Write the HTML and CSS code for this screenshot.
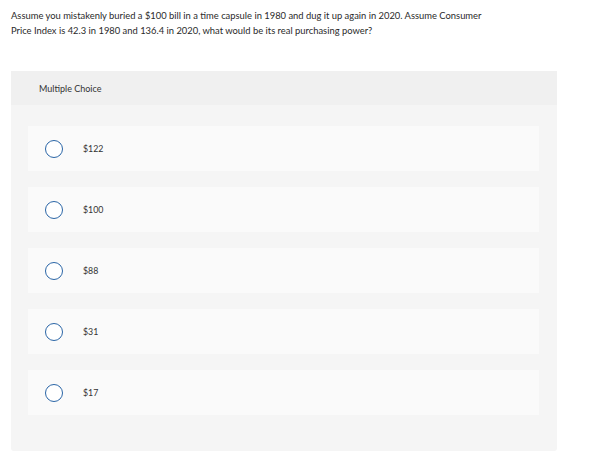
FILE: index.html
```html
<!DOCTYPE html>
<html>
<head>
<meta charset="utf-8">
<link rel="stylesheet" href="styles.css">
</head>
<body>
<div class="question">Assume you mistakenly buried a $100 bill in a time capsule in 1980 and dug it up again in 2020. Assume Consumer Price Index is 42.3 in 1980 and 136.4 in 2020, what would be its real purchasing power?</div>
<div class="panel">
  <div class="panel-header">Multiple Choice</div>
  <div class="panel-body">
    <div class="option"><span class="radio"></span><span class="label">$122</span></div>
    <div class="option"><span class="radio"></span><span class="label">$100</span></div>
    <div class="option"><span class="radio"></span><span class="label">$88</span></div>
    <div class="option"><span class="radio"></span><span class="label">$31</span></div>
    <div class="option"><span class="radio"></span><span class="label">$17</span></div>
  </div>
</div>
</body>
</html>
```
FILE: styles.css
```css
html, body {
  margin: 0;
  padding: 0;
  background: #ffffff;
}
body {
  font-family: Lato, "Liberation Sans", sans-serif;
  color: #2a2a2a;
}
.question {
  padding: 8px 0 0 11px;
  width: 490px;
  font-size: 9.4px;
  line-height: 15px;
}
.panel {
  margin: 33px 0 0 11px;
  width: 546px;
  background: #f5f5f5;
  border-radius: 0 0 3px 3px;
  padding-bottom: 36px;
}
.panel-header {
  height: 34px;
  background: #f0f0f0;
  display: flex;
  align-items: center;
  padding-left: 28px;
  font-size: 9px;
  color: #333333;
}
.panel-body {
  padding: 21px 18px 0 17px;
  display: flex;
  flex-direction: column;
  gap: 16px;
}
.option {
  height: 45px;
  background: #fafafa;
  display: flex;
  align-items: center;
  padding-left: 17px;
}
.radio {
  width: 16px;
  height: 16px;
  border: 1.5px solid #2a65a6;
  border-radius: 50%;
  background: #ffffff;
  flex: none;
  margin-top: 1px;
}
.label {
  margin-left: 20px;
  font-size: 8.8px;
  color: #333333;
}
```
